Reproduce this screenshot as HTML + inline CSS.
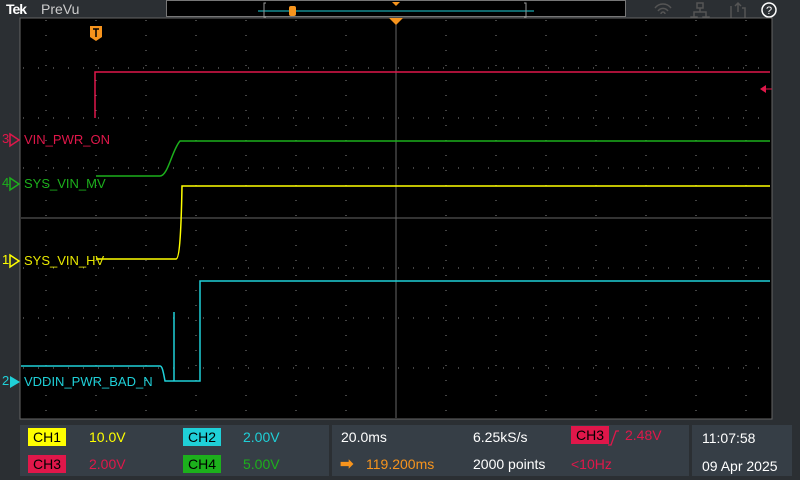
<!DOCTYPE html>
<html><head><meta charset="utf-8"><style>
body{margin:0;width:800px;height:480px;background:#2b2f33;overflow:hidden;font-family:"Liberation Sans",sans-serif;position:relative}
.t{position:absolute;font-size:14px;white-space:nowrap}
.b{position:absolute;font-size:14px;padding:1px 5px;color:#000;line-height:16px}
.p{position:absolute;background:#363e46;top:425px;height:51px}
</style></head><body>
<div class="t" style="left:6px;top:1px;color:#fff;font-weight:bold;font-size:14px;letter-spacing:-1px">Tek</div>
<div class="t" style="left:41px;top:1px;color:#ccc;font-size:14px">PreVu</div>
<div style="position:absolute;left:166px;top:0;width:458px;height:15px;background:#000;border:1px solid #777"></div>
<svg style="position:absolute;left:0;top:0" width="800" height="480">
<line x1="258" y1="11" x2="534" y2="11" stroke="#1fd0d8" stroke-width="1"/>
<path d="M266 3h-2v14h2M524 3h2v14h-2" stroke="#999" fill="none"/>
<rect x="289" y="6" width="7" height="10" rx="2" fill="#f7941d"/>
<path d="M392 2h8l-4 4z" fill="#f7941d"/>
<g stroke="#555" fill="none" stroke-width="1.5">
<path d="M655 8a10 10 0 0 1 16 0M658 11a6 6 0 0 1 10 0M661 14a2 2 0 0 1 4 0"/>
<path d="M697 3h6v5h-6zM691 17h6v4h-6zM703 17h6v4h-6zM700 8v4M694 17v-5h12v5"/>
<path d="M731 6v15h14v-13h-3M738 12v-9M735 6l3-3 3 3"/>
</g>
<circle cx="769" cy="10" r="7" stroke="#fff" fill="none" stroke-width="1.5"/>
<text x="769" y="14" fill="#fff" font-size="11" text-anchor="middle" font-family="Liberation Sans">?</text>
<rect x="20" y="18" width="752" height="401" fill="#000" stroke="#666" stroke-width="1"/>
<g stroke="#888" stroke-width="1" stroke-dasharray="1 14">
<path d="M46 20V418M96 20V418M146 20V418M196 20V418M246 20V418M296 20V418M346 20V418M446 20V418M496 20V418M546 20V418M596 20V418M646 20V418M696 20V418M746 20V418"/>
<path d="M23 68H770M23 118H770M23 168H770M23 268H770M23 318H770M23 368H770"/>
</g>
<path d="M396 19V418M21 218H771" stroke="#666" stroke-width="1"/>
<path d="M389 18h14l-7 7z" fill="#f7941d"/>
<path d="M90 26h12v11l-6 4-6-4z" fill="#f7941d"/><path d="M93 29h6M96 29v8" stroke="#000" stroke-width="1.5"/>
<path d="M95 118V72H770" stroke="#e0174a" fill="none" stroke-width="1.5"/>
<path d="M760 89l6-4v8z" fill="#e0174a"/><path d="M764 89h8" stroke="#e0174a"/>
<path d="M96 176H160C168 176 172 150 180 141H770" stroke="#1cb01c" fill="none" stroke-width="1.5"/>
<path d="M96 259H176C179 259 181 240 182 186H770" stroke="#ffff00" fill="none" stroke-width="1.5"/>
<path d="M21 366H160C162 366 163 370 165 381H174V312V381H200V281H770" stroke="#1fd0d8" fill="none" stroke-width="1.5"/>
<path d="M10 134l9 6-9 6z" fill="none" stroke="#e0174a" stroke-width="1.5"/>
<path d="M10 178l9 6-9 6z" fill="none" stroke="#1cb01c" stroke-width="1.5"/>
<path d="M10 255l9 6-9 6z" fill="none" stroke="#ffff00" stroke-width="1.5"/>
<path d="M10 376l10 6-10 6z" fill="#1fd0d8"/>
</svg>
<div class="t" style="left:2px;top:131px;color:#e0174a;font-size:13px">3</div>
<div class="t" style="left:24px;top:132px;color:#e0174a;font-size:13px">VIN_PWR_ON</div>
<div class="t" style="left:2px;top:175px;color:#1cb01c;font-size:13px">4</div>
<div class="t" style="left:24px;top:176px;color:#1cb01c;font-size:13px">SYS_VIN_MV</div>
<div class="t" style="left:2px;top:252px;color:#ffff00;font-size:13px">1</div>
<div class="t" style="left:24px;top:253px;color:#e8e800;font-size:13px">SYS_VIN_HV</div>
<div class="t" style="left:2px;top:373px;color:#1fd0d8;font-size:13px">2</div>
<div class="t" style="left:24px;top:374px;color:#1fd0d8;font-size:13px">VDDIN_PWR_BAD_N</div>
<div class="p" style="left:20px;width:309px"></div>
<div class="p" style="left:332px;width:357px"></div>
<div class="p" style="left:692px;width:100px"></div>
<svg style="position:absolute;left:0;top:0" width="800" height="480">
<path d="M608 445h3l5-14h3" stroke="#e0174a" fill="none" stroke-width="1.3"/>
</svg>
<div class="b" style="left:28px;top:428px;background:#ffff00">CH1</div>
<div class="t" style="left:89px;top:429px;color:#ffff00">10.0V</div>
<div class="b" style="left:183px;top:428px;background:#1fd0d8">CH2</div>
<div class="t" style="left:243px;top:429px;color:#1fd0d8">2.00V</div>
<div class="b" style="left:28px;top:455px;background:#e0174a">CH3</div>
<div class="t" style="left:89px;top:456px;color:#e0174a">2.00V</div>
<div class="b" style="left:183px;top:455px;background:#1cb01c">CH4</div>
<div class="t" style="left:243px;top:456px;color:#1cb01c">5.00V</div>
<div class="t" style="left:341px;top:429px;color:#fff">20.0ms</div>
<div class="t" style="left:473px;top:429px;color:#fff">6.25kS/s</div>
<div class="b" style="left:571px;top:426px;background:#e0174a">CH3</div>
<div class="t" style="left:625px;top:427px;color:#e0174a">2.48V</div>
<div class="t" style="left:340px;top:454px;color:#f7941d;font-weight:bold;font-size:16px">➡</div>
<div class="t" style="left:366px;top:456px;color:#f7941d">119.200ms</div>
<div class="t" style="left:473px;top:456px;color:#fff">2000 points</div>
<div class="t" style="left:571px;top:456px;color:#e0174a">&lt;10Hz</div>
<div class="t" style="left:702px;top:430px;color:#fff">11:07:58</div>
<div class="t" style="left:702px;top:458px;color:#fff">09 Apr 2025</div>
</body></html>
